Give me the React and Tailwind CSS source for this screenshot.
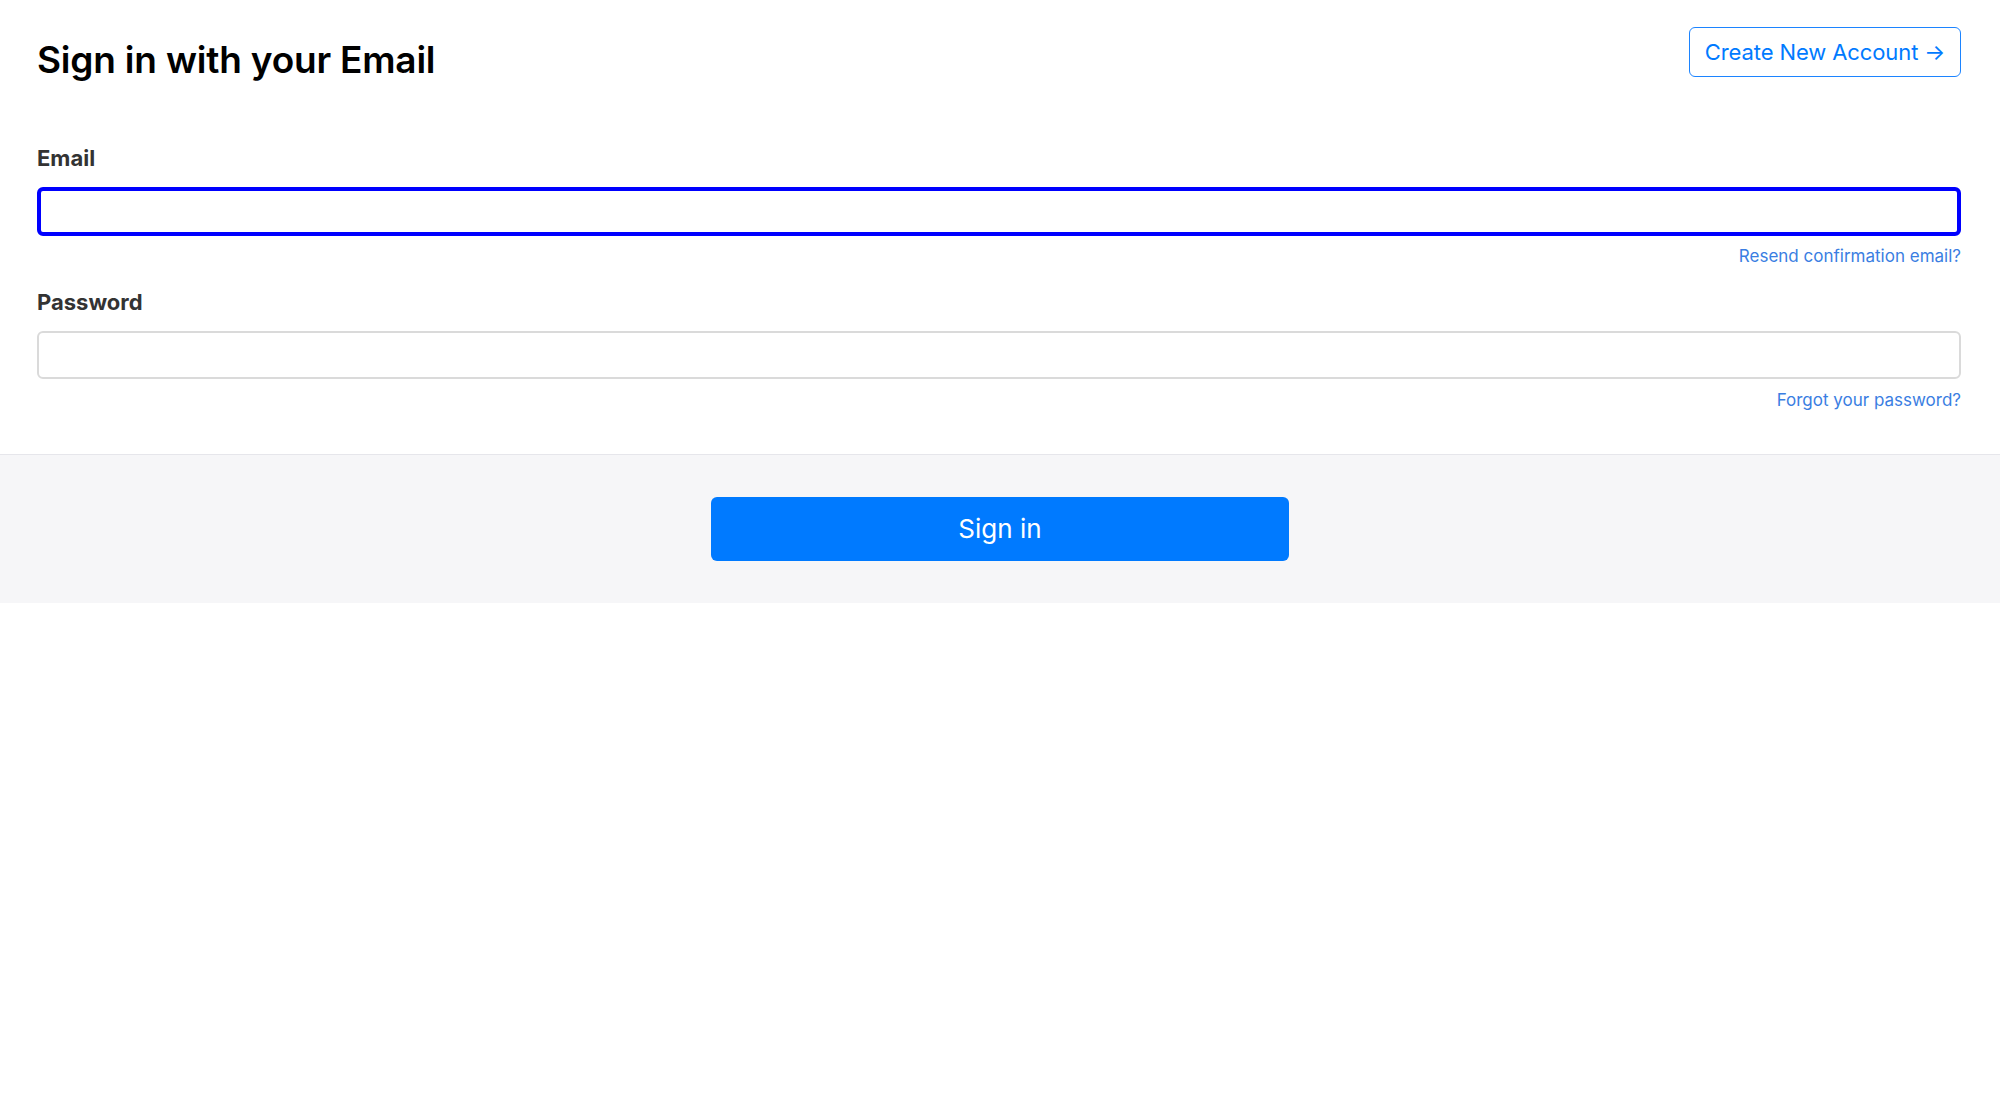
import React from "react";

export default function App() {
  return (
    <div
      className="min-h-screen w-full bg-white text-black"
      style={{ fontFamily: 'Inter, "Noto Sans", "Liberation Sans", sans-serif' }}
    >
      <div className="pl-[37px] pr-[39px] pt-[27px] pb-[43px]">
        <div className="flex items-start justify-between">
          <h1 className="mt-[10px] text-[37px] leading-[46px] font-semibold tracking-[-0.2px] text-black">
            Sign in with your Email
          </h1>
          <button className="flex h-[50px] w-[272px] items-center justify-center rounded-[6px] border border-[#1c84ff] bg-white text-[22px] leading-[26px] tracking-[-0.1px] text-[#007aff]">
            Create New Account →
          </button>
        </div>

        <div className="mt-[62px] flex flex-col">
          <label className="text-[22px] leading-[26px] font-bold text-[#333333]">Email</label>
          <div className="mt-[16px] h-[49px] w-full rounded-[6px] border-[4px] border-[#0000ff] bg-white" />
          <div className="mt-[9px] flex justify-end">
            <a className="text-[17px] leading-[22px] text-[#3a7ee2]">Resend confirmation email?</a>
          </div>

          <label className="mt-[22px] text-[22px] leading-[26px] font-bold text-[#333333]">Password</label>
          <div className="mt-[16px] h-[48px] w-full rounded-[6px] border-2 border-[#dadada] bg-white" />
          <div className="mt-[10px] flex justify-end">
            <a className="text-[17px] leading-[22px] text-[#3a7ee2]">Forgot your password?</a>
          </div>
        </div>
      </div>

      <div className="flex justify-center border-t border-[#e6e6eb] bg-[#f6f6f8] py-[42px]">
        <button className="h-[64px] w-[578px] rounded-[6px] bg-[#007aff] text-[26px] leading-[32px] text-white">
          Sign in
        </button>
      </div>
    </div>
  );
}
